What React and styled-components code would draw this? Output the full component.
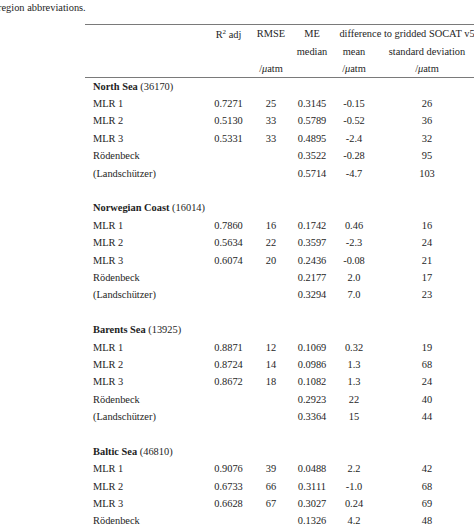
import React from 'react';
import styled, { createGlobalStyle } from 'styled-components';

const GlobalStyle = createGlobalStyle`
  html, body {
    margin: 0;
    padding: 0;
    background: #fff;
    overflow: hidden;
  }
  body {
    font-family: "Liberation Serif", "Times New Roman", serif;
    color: #1e1e1e;
  }
`;

const Page = styled.div`
  width: 474px;
  height: 526px;
  overflow: hidden;
  font-size: 10.4px;
`;

const Caption = styled.p`
  margin: 0 0 0 -2px;
  padding-top: 1px;
  height: 23px;
  line-height: 14px;
`;

const Table = styled.table`
  margin-left: 85px;
  width: 395px;
  table-layout: fixed;
  border-collapse: collapse;
  border-spacing: 0;
  border-top: 1px solid #7a7a7a;
`;

const Head = styled.thead`
  border-bottom: 1px solid #7a7a7a;
`;

const HeadRow = styled.tr`
  height: ${(p) => p.$h || 18}px;
`;

const Th = styled.th`
  padding: 0;
  font-weight: normal;
  text-align: center;
  white-space: nowrap;
  vertical-align: middle;
`;

const Row = styled.tr`
  height: 17.4px;
`;

const Label = styled.td`
  padding: 0 0 0 8px;
  text-align: left;
  white-space: nowrap;
  vertical-align: middle;
`;

const Cell = styled.td`
  padding: 0;
  text-align: center;
  white-space: nowrap;
  vertical-align: middle;
`;

const Region = styled.b`
  font-weight: bold;
`;

const Sup = styled.sup`
  font-size: 7px;
`;

const Unit = () => (
  <>
    /<i>μ</i>atm
  </>
);

const groups = [
  {
    name: 'North Sea',
    n: 36170,
    rows: [
      ['MLR 1', '0.7271', '25', '0.3145', '-0.15', '26'],
      ['MLR 2', '0.5130', '33', '0.5789', '-0.52', '36'],
      ['MLR 3', '0.5331', '33', '0.4895', '-2.4', '32'],
      ['Rödenbeck', '', '', '0.3522', '-0.28', '95'],
      ['(Landschützer)', '', '', '0.5714', '-4.7', '103'],
    ],
  },
  {
    name: 'Norwegian Coast',
    n: 16014,
    rows: [
      ['MLR 1', '0.7860', '16', '0.1742', '0.46', '16'],
      ['MLR 2', '0.5634', '22', '0.3597', '-2.3', '24'],
      ['MLR 3', '0.6074', '20', '0.2436', '-0.08', '21'],
      ['Rödenbeck', '', '', '0.2177', '2.0', '17'],
      ['(Landschützer)', '', '', '0.3294', '7.0', '23'],
    ],
  },
  {
    name: 'Barents Sea',
    n: 13925,
    rows: [
      ['MLR 1', '0.8871', '12', '0.1069', '0.32', '19'],
      ['MLR 2', '0.8724', '14', '0.0986', '1.3', '68'],
      ['MLR 3', '0.8672', '18', '0.1082', '1.3', '24'],
      ['Rödenbeck', '', '', '0.2923', '22', '40'],
      ['(Landschützer)', '', '', '0.3364', '15', '44'],
    ],
  },
  {
    name: 'Baltic Sea',
    n: 46810,
    rows: [
      ['MLR 1', '0.9076', '39', '0.0488', '2.2', '42'],
      ['MLR 2', '0.6733', '66', '0.3111', '-1.0', '68'],
      ['MLR 3', '0.6628', '67', '0.3027', '0.24', '69'],
      ['Rödenbeck', '', '', '0.1326', '4.2', '48'],
    ],
  },
];

export default function App() {
  return (
    <Page>
      <GlobalStyle />
      <Caption>region abbreviations.</Caption>
      <Table>
        <colgroup>
          <col style={{ width: 120 }} />
          <col style={{ width: 47 }} />
          <col style={{ width: 38 }} />
          <col style={{ width: 44 }} />
          <col style={{ width: 40 }} />
          <col style={{ width: 106 }} />
        </colgroup>
        <Head>
          <HeadRow>
            <Th rowSpan={3}></Th>
            <Th>
              R<Sup>2</Sup> adj
            </Th>
            <Th>RMSE</Th>
            <Th>ME</Th>
            <Th colSpan={2}>difference to gridded SOCAT v5</Th>
          </HeadRow>
          <HeadRow>
            <Th></Th>
            <Th></Th>
            <Th>median</Th>
            <Th>mean</Th>
            <Th>standard deviation</Th>
          </HeadRow>
          <HeadRow $h={17}>
            <Th></Th>
            <Th><Unit /></Th>
            <Th></Th>
            <Th><Unit /></Th>
            <Th><Unit /></Th>
          </HeadRow>
        </Head>
        <tbody>
          {groups.map((g, gi) => (
            <React.Fragment key={g.name}>
              {gi > 0 && (
                <Row>
                  <Cell colSpan={6}></Cell>
                </Row>
              )}
              <Row>
                <Label colSpan={6}>
                  <Region>{g.name}</Region> ({g.n})
                </Label>
              </Row>
              {g.rows.map((r, ri) => (
                <Row key={ri}>
                  <Label>{r[0]}</Label>
                  {r.slice(1).map((v, vi) => (
                    <Cell key={vi}>{v}</Cell>
                  ))}
                </Row>
              ))}
            </React.Fragment>
          ))}
        </tbody>
      </Table>
    </Page>
  );
}
